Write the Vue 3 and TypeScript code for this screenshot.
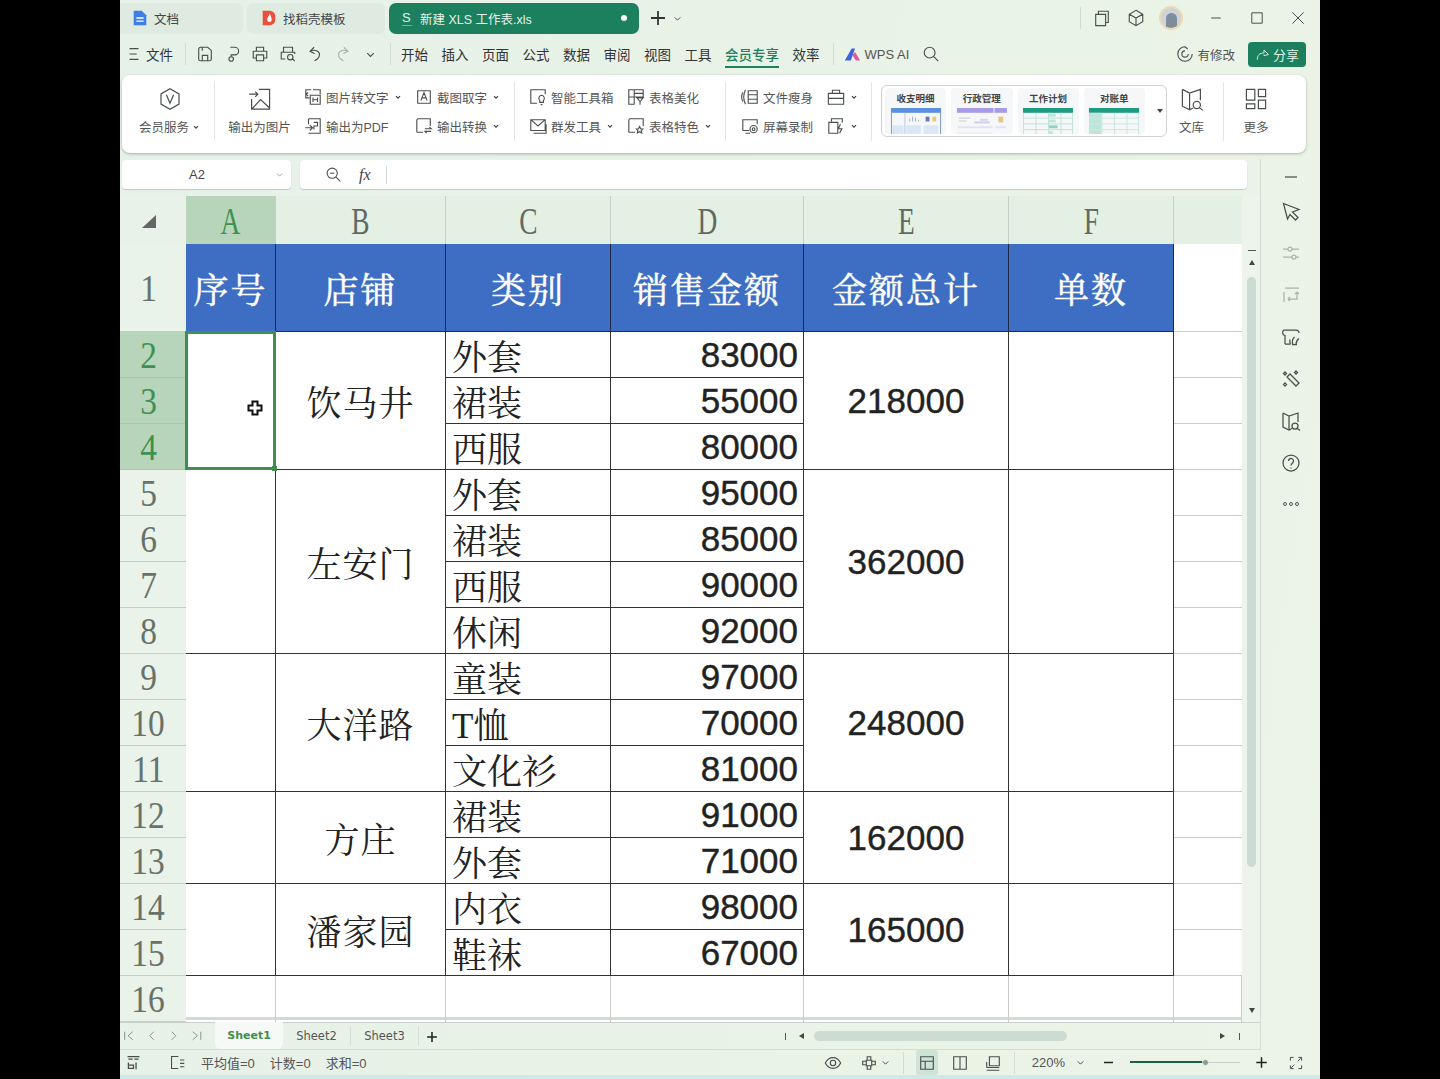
<script setup lang="ts">
interface Cell {
  key: string;
  text: string;
  cls: string[];
  row: number;
  col: number;
  span: number;
}

interface Tool {
  icon: string;
  label: string;
  arrow?: boolean;
}

const icons: Record<string, string> = {
  menu: 'M5 4h10M5 10h8M5 16h10',
  save: 'M3 4.500a2 2 0 0 1 2-2h8l4 3.500v9.500a2 2 0 0 1-2 2H5a2 2 0 0 1-2-2zM7 17.500v-6h6v6M7 2.500v4',
  key: 'M7 2.500h5a4 4 0 0 1 0 8.500H8v2M8 13a2.500 2.500 0 1 0 0 5 2.500 2.500 0 0 0 0-5',
  print: 'M6 7V2.500h8V7M6 14.500H2.500V7h15v7.500H14M6 11h8v6.500H6z',
  preview: 'M5 8V2.500h10V8M7 15.500H2.500V8h15v2M12.500 10.500a3 3 0 1 0 0 6 3 3 0 0 0 0-6M14.700 15l2.800 3',
  undo: 'M9 2.500L4.500 7l5 2.500M4.500 7c5-2.500 10.500-.5 10.500 3.500 0 3.500-2.500 5.500-5.500 7',
  redo: 'M11 2.500L15.500 7l-5 2.500M15.500 7c-5-2.500-10.500-.5-10.500 3.500 0 3.500 2.500 5.500 5.500 7',
  chevron: 'M5 8l5 5 5-5',
  close: 'M3 3l14 14M17 3L3 17',
  plus: 'M10 3v14M3 10h14',
  minus: 'M4 10h12',
  max: 'M3.500 3.500h13v13h-13z',
  restore: 'M3 6h11v12.500H3zM6 6V2.500h11V15h-3',
  cube: 'M10 1.500l7.500 4.300v8.400L10 18.500l-7.500-4.300V5.800zM2.500 5.800L10 10l7.500-4.200M10 10v8.500',
  cloud: 'M10 2a8 8 0 1 0 8 8M10 2l3 2.500M10 6.500a3.500 3.500 0 1 0 3.500 3.500',
  share: 'M3 17c0-6 3-9 9-9V4l6 6-6 1.500V10',
  search: 'M8.500 2.500a6 6 0 1 0 0 12 6 6 0 0 0 0-12M13 13l5 5',
  vip: 'M10 1.500l7.500 4.300v8.400L10 18.500l-7.500-4.300V5.800zM7 6.500l3 7 3-7',
  imgout: 'M9 2h9v16.500H3V10M1 6h7M6 3.800L8.200 6 6 8.200M3.500 18l7-7.500 7.500 7',
  imgtext: 'M8 2H2v9h4M4.500 5l-2 2 2 2M10 2h8v5M7 8h11v10H7zM10 10.500v5M15 10.500v5M10 13h5',
  pdf: 'M5 2h13v16H9M5 2v6M1.500 12H9M6.500 9l3 3-3 3M5 18h4M11 6h4v4h-4v4',
  crop: 'M3 3h14v14H3zM6.500 14l3.500-9 3.500 9M7.800 11h4.400',
  convert: 'M2 17V4a2 2 0 0 1 2-2h13v8M2 17h7M11 13h7l-2-2M18 16h-7l2 2',
  toolbox: 'M2 7V2h16v5M2 2v15h7M14 8a3.500 3.500 0 0 0-2 6v2h4v-2a3.500 3.500 0 0 0-2-6M13 18.500h2',
  beauty: 'M2 2h16v8H2zM2 10v8h6V2M8 6h10M11 11h7l-3.500 4zM14.500 15v3.500',
  mass: 'M2 3h16v12H2zM2 3l8 7 8-7M5 18h14V8',
  feature: 'M2 17V4a2 2 0 0 1 2-2h14v8M2 17h7M14 10.500l1.200 2.500 2.500.3-1.800 1.800.5 2.600-2.400-1.300-2.400 1.300.5-2.600-1.800-1.800 2.500-.3z',
  slim: 'M8 3h10v14H8zM8 7.500h10M8 12.500h10M5 2c-2.500 5-2.500 11 0 16M2 5c-1.500 3-1.500 7 0 10',
  record: 'M2 15V3h16v5M2 15h7M5 18h5M14 9.500a4 4 0 1 0 0 8 4 4 0 0 0 0-8M14 12a1.500 1.500 0 1 0 0 3 1.500 1.500 0 0 0 0-3',
  box: 'M6 6V2.500h8V6M1.500 6h17v12h-17zM1.500 11.500h17',
  copy: 'M5 5V2h12v4M2 6h10v12H2zM15 8l-2.500 5h4L14 18',
  library: 'M2 2l6 3 9-3v9M2 2v14l6 3V5M8 19l3-1.500M14 12a3 3 0 1 0 0 6 3 3 0 0 0 0-6M16 17l3 2.500',
  more: 'M2 2h7v9H2zM12 2h6v6h-6zM2 14h7v4H2zM12 11h6v7h-6z',
  pointer: 'M2.500 2.500l15.500 6-6.500 2.500 5.500 5.500-2.500 2.500-5.500-5.500L6.500 18z',
  sliders: 'M2 6h5M11 6h7M7 6a2 2 0 1 0 4 0 2 2 0 0 0-4 0M2 14h9M15 14h3M11 14a2 2 0 1 0 4 0 2 2 0 0 0-4 0',
  wrap: 'M4 3h14M3 7v10M16 7v7H7M7 14l2-2M7 14l2 2M16 7l-2 2M16 7l2 2',
  leaf: 'M4 17V8.500a3 3 0 0 1-1-5.500h12a3 3 0 0 1 3 3M4 17h5M12 17.500c-1.500-3-.5-5.500 1.500-7.500M15 17.500c0-2.500 1-4.500 3-6M9.500 17.500c-1-1.500-1-3-.5-5M11 17.500h5',
  magic: 'M6 8l3-3 9 9-3 3zM4 3l1.500 1.500L4 6 2.500 4.500zM15 2l1.500 1.500L15 5l-1.500-1.500zM4 14l1.500 1.500L4 17l-1.500-1.500z',
  help: 'M10 2a8 8 0 1 0 0 16 8 8 0 0 0 0-16M7.500 8a2.500 2.500 0 1 1 4 2c-1 .8-1.500 1.300-1.500 2.500M10 14.500v1',
  first: 'M4 4v12M16 4l-7 6 7 6',
  prev: 'M13 4l-6 6 6 6',
  next: 'M7 4l6 6-6 6',
  last: 'M16 4v12M4 4l7 6-7 6',
  vba: 'M3 3h14M4 6h5M11 6h5M4 10v7h6v-4H4M13 10v8',
  sidebar: 'M11 3H3v14h8M13 7h5M13 11h5M13 15h5',
  eye: 'M1.500 10C4 5 7 4 10 4s6 1 8.500 6c-2.500 5-5.500 6-8.500 6s-6-1-8.500-6zM10 7a3 3 0 1 0 0 6 3 3 0 0 0 0-6',
  gear: 'M7 7h6v6H7zM8 7V3h4v4M8 13v4h4v-4M7 8H3v4h4M13 8h4v4h-4',
  normal: 'M3 3h14v14H3zM3 8h14M8 8v9',
  reading: 'M3 3h14v14H3zM10 3v14',
  page: 'M6 3h11v10H6zM3 15h14M3 18h14M3 15V9',
  fit: 'M3 7V3h4M13 3h4v4M17 13v4h-4M7 17H3v-4M12 8l4-4M8 12l-4 4',
}

const toolColumns: { cls: string; tools: Tool[] }[] = [
  { cls: 'c1', tools: [{ icon: 'imgtext', label: '图片转文字', arrow: true }, { icon: 'pdf', label: '输出为PDF' }] },
  { cls: 'c2 sep', tools: [{ icon: 'crop', label: '截图取字', arrow: true }, { icon: 'convert', label: '输出转换', arrow: true }] },
  { cls: 'c3', tools: [{ icon: 'toolbox', label: '智能工具箱' }, { icon: 'mass', label: '群发工具', arrow: true }] },
  { cls: 'c4 sep', tools: [{ icon: 'beauty', label: '表格美化' }, { icon: 'feature', label: '表格特色', arrow: true }] },
  { cls: 'c5', tools: [{ icon: 'slim', label: '文件瘦身' }, { icon: 'record', label: '屏幕录制' }] },
  { cls: 'c6 sep', tools: [{ icon: 'box', label: '', arrow: true }, { icon: 'copy', label: '', arrow: true }] },
]

const menuItems = ['开始', '插入', '页面', '公式', '数据', '审阅', '视图', '工具']
const quickIcons = ['save', 'key', 'print', 'preview', 'undo', 'redo', 'chevron']
const sideIcons = ['minus', 'pointer', 'sliders', 'wrap', 'leaf', 'magic', 'library', 'help']

const gallery = [
  {
    title: '收支明细',
    rects: [
      [0, 0, 52, 5, '#5b8fe0'], [0, 5, 1, 24, '#7f98c0'], [51, 5, 1, 24, '#7f98c0'],
      [1, 18, 12, 11, '#dbe6f6'], [16, 18, 15, 11, '#dbe6f6'], [34, 18, 15, 11, '#dbe6f6'],
      [14, 5, 1, 24, '#b8c8e0'], [19, 11, 1, 3, '#9ab0d0'], [22, 9, 1, 5, '#9ab0d0'],
      [25, 10, 1, 4, '#9ab0d0'], [28, 12, 1, 2, '#9ab0d0'], [36, 9, 4, 5, '#5c7fb5'], [43, 9, 4, 5, '#eec877'],
    ],
  },
  {
    title: '行政管理',
    rects: [
      [0, 0, 38, 5, '#a79be8'], [39, 0, 13, 5, '#a79be8'], [2, 10, 12, 1, '#c9c4de'],
      [2, 13, 8, 1, '#dfc9a8'], [18, 14, 16, 2, '#cfd0e8'], [24, 11, 8, 3, '#dcdcf0'],
      [43, 9, 5, 6, '#e4c48a'], [1, 19, 36, 2, '#e3e2f3'], [1, 25, 36, 2, '#eeeef8'], [40, 19, 11, 2, '#e3e2f3'],
    ],
  },
  {
    title: '工作计划',
    rects: [
      [0, 0, 52, 5, '#1d9c84'], [0, 10, 52, 1, '#bfe2da'], [0, 16, 52, 1, '#bfe2da'], [0, 22, 52, 1, '#bfe2da'],
      [0, 5, 1, 24, '#bfe2da'], [13, 5, 1, 24, '#bfe2da'], [26, 5, 1, 24, '#bfe2da'], [39, 5, 1, 24, '#bfe2da'], [51, 5, 1, 24, '#bfe2da'],
      [27, 6, 7, 3, '#bfe5db'], [27, 12, 7, 3, '#bfe5db'], [27, 18, 9, 3, '#8fd3c4'], [27, 24, 4, 3, '#bfe5db'],
    ],
  },
  {
    title: '对账单',
    rects: [
      [0, 0, 52, 5, '#1d9c84'], [0, 5, 13, 24, '#bfe5db'], [0, 10, 52, 1, '#c9e7e0'], [0, 16, 52, 1, '#c9e7e0'],
      [0, 22, 52, 1, '#c9e7e0'], [13, 5, 1, 24, '#c9e7e0'], [26, 5, 1, 24, '#c9e7e0'], [39, 5, 1, 24, '#c9e7e0'], [51, 5, 1, 24, '#c9e7e0'],
    ],
  },
]

const groups = [
  { name: '饮马井', total: '218000', items: [['外套', '83000'], ['裙装', '55000'], ['西服', '80000']] },
  { name: '左安门', total: '362000', items: [['外套', '95000'], ['裙装', '85000'], ['西服', '90000'], ['休闲', '92000']] },
  { name: '大洋路', total: '248000', items: [['童装', '97000'], ['T恤', '70000'], ['文化衫', '81000']] },
  { name: '方庄', total: '162000', items: [['裙装', '91000'], ['外套', '71000']] },
  { name: '潘家园', total: '165000', items: [['内衣', '98000'], ['鞋袜', '67000']] },
]

function buildCells(): Cell[] {
  const list: Cell[] = []
  const add = (text: string, cls: string[], row: number, col: number, span = 1) => {
    list.push({ key: `${row}-${col}`, text, cls, row, col, span })
  }

  add('', ['corner'], 1, 1)
  ;['A', 'B', 'C', 'D', 'E', 'F'].forEach((letter, i) => {
    add(letter, i === 0 ? ['letter', 'picked'] : ['letter'], 1, i + 2)
  })
  add('', ['letter', 'plain'], 1, 8)

  for (let n = 1; n <= 16; n++) {
    add(String(n), n >= 2 && n <= 4 ? ['rownum', 'picked'] : ['rownum'], n + 1, 1)
    add('', n === 16 ? ['spare', 'tail'] : ['spare'], n + 1, 8)
  }

  ;['序号', '店铺', '类别', '销售金额', '金额总计', '单数'].forEach((title, i) => {
    add(title, ['head'], 2, i + 2)
    add('', ['spare', 'tail'], 17, i + 2)
  })

  let row = 3
  for (const group of groups) {
    const span = group.items.length
    add('', ['data', 'merged'], row, 2, span)
    add(group.name, ['data', 'merged', 'shop'], row, 3, span)
    group.items.forEach(([kind, amount], i) => {
      add(kind, ['data', 'kind'], row + i, 4)
      add(amount, ['data', 'num'], row + i, 5)
    })
    add(group.total, ['data', 'merged', 'total'], row, 6, span)
    add('', ['data', 'merged'], row, 7, span)
    row += span
  }
  return list
}

const cells = buildCells()
</script>

<template>
  <div class="app">
    <header class="titlebar">
      <div class="tab first">
        <svg class="tab-logo" viewBox="0 0 20 20"><path d="M3 2h9l5 5v11H3z" fill="#3d7fe6" /><path d="M6 10h8M6 13.500h8" stroke="#fff" stroke-width="1.500" /></svg>
        <span>文档</span>
      </div>
      <div class="tab">
        <svg class="tab-logo" viewBox="0 0 20 20"><path d="M3 2h8a6 6 0 0 1 6 6v4a6 6 0 0 1-6 6H3z" fill="#e9503f" /><path d="M11 5c-1 3-3 4-3 7a2.500 2.500 0 0 0 5 0c0-2-1-4-2-7z" fill="#fff" /></svg>
        <span>找稻壳模板</span>
      </div>
      <div class="tab active">
        <span class="tab-s">S</span>
        <span class="tab-name">新建 XLS 工作表.xls</span>
        <i class="tab-dot"></i>
      </div>
      <svg class="ico add" viewBox="0 0 20 20"><path :d="icons.plus" /></svg>
      <svg class="ico tiny" viewBox="0 0 20 20"><path :d="icons.chevron" /></svg>
      <div class="title-right">
        <i class="vline"></i>
        <svg class="ico" viewBox="0 0 20 20"><path :d="icons.restore" /></svg>
        <svg class="ico" viewBox="0 0 20 20"><path :d="icons.cube" /></svg>
        <span class="avatar"><i></i></span>
        <svg class="ico win" viewBox="0 0 20 20"><path :d="icons.minus" /></svg>
        <svg class="ico win" viewBox="0 0 20 20"><path :d="icons.max" /></svg>
        <svg class="ico win" viewBox="0 0 20 20"><path :d="icons.close" /></svg>
      </div>
    </header>

    <nav class="menubar">
      <svg class="ico menu-ico" viewBox="0 0 20 20"><path :d="icons.menu" /></svg>
      <span class="menu-file">文件</span>
      <i class="vline"></i>
      <div class="quick">
        <svg
          v-for="name in quickIcons"
          :key="name"
          class="ico"
          :class="{ faded: name === 'redo', small: name === 'chevron' }"
          viewBox="0 0 20 20"
        >
          <path :d="icons[name]" />
        </svg>
      </div>
      <i class="vline"></i>
      <div class="menu-items">
        <span v-for="item in menuItems" :key="item">{{ item }}</span>
        <span class="current">会员专享</span>
        <span>效率</span>
      </div>
      <i class="vline"></i>
      <svg class="wps-logo" viewBox="0 0 20 20"><path d="M1 17L9 3h4l-5 14z" fill="#3e63dd" /><path d="M10 11l3-4 6 10h-5z" fill="#e8559a" /></svg>
      <span class="wps-ai">WPS AI</span>
      <svg class="ico lookup" viewBox="0 0 20 20"><path :d="icons.search" /></svg>
      <div class="menu-right">
        <svg class="ico" viewBox="0 0 20 20"><path :d="icons.cloud" /></svg>
        <span>有修改</span>
        <button class="share" type="button">
          <svg class="ico" viewBox="0 0 20 20"><path :d="icons.share" /></svg>
          分享
        </button>
      </div>
    </nav>

    <section class="ribbon">
      <div class="rb-big vip sep">
        <svg class="ico big" viewBox="0 0 20 20"><path :d="icons.vip" /></svg>
        <span>会员服务<svg class="ico arrow" viewBox="0 0 20 20"><path :d="icons.chevron" /></svg></span>
      </div>
      <div class="rb-big out">
        <svg class="ico big" viewBox="0 0 20 20"><path :d="icons.imgout" /></svg>
        <span>输出为图片</span>
      </div>
      <div v-for="column in toolColumns" :key="column.cls" class="rb-col" :class="column.cls">
        <div v-for="tool in column.tools" :key="tool.icon" class="rb-item">
          <svg class="ico" viewBox="0 0 20 20"><path :d="icons[tool.icon]" /></svg>
          <span v-if="tool.label">{{ tool.label }}</span>
          <svg v-if="tool.arrow" class="ico arrow" viewBox="0 0 20 20"><path :d="icons.chevron" /></svg>
        </div>
      </div>
      <div class="gallery">
        <div v-for="card in gallery" :key="card.title" class="g-card">
          <b>{{ card.title }}</b>
          <svg viewBox="0 0 52 27" width="52" height="27">
            <rect
              v-for="(r, i) in card.rects"
              :key="i"
              :x="(r[0] as number)"
              :y="(r[1] as number)"
              :width="(r[2] as number)"
              :height="(r[3] as number)"
              :fill="(r[4] as string)"
            />
          </svg>
        </div>
        <i class="g-more"></i>
      </div>
      <div class="rb-big lib sep">
        <svg class="ico big" viewBox="0 0 20 20"><path :d="icons.library" /></svg>
        <span>文库</span>
      </div>
      <div class="rb-big mor">
        <svg class="ico big" viewBox="0 0 20 20"><path :d="icons.more" /></svg>
        <span>更多</span>
      </div>
    </section>

    <div class="formula">
      <div class="namebox">
        <span>A2</span>
        <svg class="ico tiny" viewBox="0 0 20 20"><path :d="icons.chevron" /></svg>
      </div>
      <div class="fxbox">
        <svg class="ico zoomy" viewBox="0 0 20 20"><path :d="icons.search" /><path d="M6 8.500h5" /></svg>
        <em>fx</em>
        <i class="vline"></i>
      </div>
    </div>

    <main class="workspace">
      <div class="sheet">
        <div
          v-for="cell in cells"
          :key="cell.key"
          class="cell"
          :class="cell.cls"
          :style="{ gridArea: `${cell.row} / ${cell.col} / span ${cell.span}` }"
        >
          <span v-if="cell.text">{{ cell.text }}</span>
          <i v-else-if="cell.cls.includes('corner')" class="tri"></i>
        </div>
        <div class="selection">
          <svg class="cursor" viewBox="0 0 16 16">
            <path d="M5.500 1.500h5v4h4v5h-4v4h-5v-4h-4v-5h4z" fill="#fff" stroke="#111" stroke-width="2" />
          </svg>
        </div>
      </div>
      <div class="vscroll">
        <i class="vs-mark"></i>
        <i class="tri-up"></i>
        <i class="vs-thumb"></i>
        <i class="tri-down"></i>
      </div>
      <aside class="sidebar">
        <svg
          v-for="name in sideIcons"
          :key="name"
          class="ico"
          :class="{ faded: name === 'sliders' || name === 'wrap' }"
          viewBox="0 0 20 20"
        >
          <path :d="icons[name]" />
        </svg>
        <span class="dots"><i></i><i></i><i></i></span>
      </aside>
    </main>

    <div class="tabsbar">
      <div class="tab-nav">
        <svg v-for="name in ['first', 'prev', 'next', 'last']" :key="name" class="ico" viewBox="0 0 20 20"><path :d="icons[name]" /></svg>
      </div>
      <span class="sheet-tab on">Sheet1</span>
      <span class="sheet-tab">Sheet2</span>
      <span class="sheet-tab ruled">Sheet3</span>
      <svg class="ico sheet-add" viewBox="0 0 20 20"><path :d="icons.plus" /></svg>
      <div class="hscroll">
        <i class="bar"></i>
        <i class="tri-left"></i>
        <span class="hs-track"><i></i></span>
        <i class="tri-right"></i>
        <i class="bar"></i>
      </div>
    </div>

    <footer class="statusbar">
      <svg class="ico st-vba" viewBox="0 0 20 20"><path :d="icons.vba" /></svg>
      <svg class="ico st-side" viewBox="0 0 20 20"><path :d="icons.sidebar" /></svg>
      <span>平均值=0</span>
      <span>计数=0</span>
      <span>求和=0</span>
      <div class="st-right">
        <svg class="ico st-eye" viewBox="0 0 20 20"><path :d="icons.eye" /></svg>
        <svg class="ico st-gear" viewBox="0 0 20 20"><path :d="icons.gear" /></svg>
        <svg class="ico tiny st-drop" viewBox="0 0 20 20"><path :d="icons.chevron" /></svg>
        <i class="st-sep"></i>
        <span class="view on"><svg class="ico" viewBox="0 0 20 20"><path :d="icons.normal" /></svg></span>
        <span class="view"><svg class="ico" viewBox="0 0 20 20"><path :d="icons.reading" /></svg></span>
        <span class="view end"><svg class="ico" viewBox="0 0 20 20"><path :d="icons.page" /></svg></span>
        <i class="st-sep"></i>
        <span class="zoom-val">220%</span>
        <svg class="ico tiny" viewBox="0 0 20 20"><path :d="icons.chevron" /></svg>
        <svg class="ico st-pm" viewBox="0 0 20 20"><path :d="icons.minus" /></svg>
        <span class="slider"><i class="fill"></i><i class="thumb"></i></span>
        <svg class="ico st-pm" viewBox="0 0 20 20"><path :d="icons.plus" /></svg>
        <svg class="ico st-fit" viewBox="0 0 20 20"><path :d="icons.fit" /></svg>
      </div>
    </footer>
    <div class="strip"></div>
  </div>
</template>

<style>
body {
  background: #000;
}
</style>

<style scoped>
.app {
  width: 1200px;
  height: 1079px;
  margin: 0 auto;
  display: flex;
  flex-direction: column;
  overflow: hidden;
  background: linear-gradient(100deg, #e6f1e8, #ebf4e6);
  font-family: "Liberation Sans", "Noto Sans CJK SC", sans-serif;
  font-size: 12.5px;
  color: #555;
}

.ico {
  width: 18px;
  height: 18px;
  flex: none;
  fill: none;
  stroke: #4a4f4c;
  stroke-width: 1.25;
}

.ico.tiny {
  width: 11px;
  height: 11px;
  stroke-width: 1.8;
}

.ico.faded {
  stroke: #aab3ad;
}

.ico.arrow {
  width: 8px;
  height: 8px;
  margin-left: 3px;
  stroke: #444;
  stroke-width: 3;
  vertical-align: 1px;
}

.vline {
  width: 1px;
  height: 22px;
  flex: none;
  background: #cfdcd2;
}

.titlebar {
  height: 36px;
  flex: none;
  display: flex;
  align-items: center;
  gap: 4px;
  box-sizing: border-box;
}

.tab {
  width: 138px;
  height: 31px;
  display: flex;
  align-items: center;
  gap: 5px;
  padding-left: 13px;
  box-sizing: border-box;
  border-radius: 7px;
  background: #dfebe0;
  color: #444;
}

.tab.first {
  width: 123px;
  padding-left: 11px;
  border-radius: 0 7px 7px 0;
}

.tab.active {
  width: 250px;
  padding-left: 13px;
  background: #1c7f5e;
  color: #e4f3ec;
}

.tab-logo {
  width: 18px;
  height: 20px;
}

.tab-s {
  width: 10px;
  margin-right: 3px;
  font-size: 13px;
  border-bottom: 1px solid #6fb097;
}

.tab-name {
  flex: 1;
}

.tab-dot {
  width: 6px;
  height: 6px;
  margin-right: 12px;
  border-radius: 50%;
  background: #fff;
}

.ico.add {
  width: 20px;
  height: 20px;
  margin-left: 5px;
  stroke: #333;
  stroke-width: 1.8;
}

.title-right {
  margin-left: auto;
  display: flex;
  align-items: center;
  gap: 16px;
  padding-right: 14px;
}

.title-right .vline {
  margin-right: -4px;
}

.avatar {
  width: 24px;
  height: 24px;
  margin-left: -2px;
  display: flex;
  align-items: flex-end;
  justify-content: center;
  overflow: hidden;
  box-sizing: border-box;
  border: 2px solid #eed9b0;
  border-radius: 50%;
  background: #ccd3d9;
}

.avatar i {
  width: 11px;
  height: 15px;
  border-radius: 6px 6px 0 0;
  background: #7f8c9c;
}

.ico.win {
  margin-left: 9px;
  width: 16px;
  height: 16px;
}

.menubar {
  height: 36px;
  flex: none;
  display: flex;
  align-items: center;
  font-size: 13.5px;
  color: #333;
}

.menu-ico {
  margin-left: 5px;
}

.menu-file {
  margin-left: 3px;
}

.menubar > .vline:nth-of-type(1) {
  margin-left: 12px;
}

.quick {
  display: flex;
  align-items: center;
  gap: 9.500px;
  margin: 0 13px 0 10px;
}

.quick .small {
  width: 13px;
  height: 13px;
  margin-left: 3px;
  stroke-width: 1.800;
}

.menu-items {
  display: flex;
  gap: 13.500px;
  margin: 0 13px 0 10px;
}

.menu-items .current {
  position: relative;
  color: #1c7f5e;
  font-weight: 500;
}

.menu-items .current::after {
  content: "";
  position: absolute;
  left: 0;
  right: 0;
  bottom: -4px;
  height: 2px;
  background: #1c7f5e;
}

.wps-logo {
  width: 17px;
  height: 17px;
  margin-left: 10px;
}

.wps-ai {
  margin-left: 4px;
  font-size: 13px;
  color: #555;
}

.lookup {
  margin-left: 13px;
}

.menu-right {
  margin-left: auto;
  display: flex;
  align-items: center;
  gap: 3px;
  margin-right: 14px;
  font-size: 12.5px;
  color: #555;
}

.share {
  width: 58px;
  height: 25px;
  margin-left: 10px;
  display: flex;
  align-items: center;
  justify-content: center;
  gap: 3px;
  padding: 0;
  border: 0;
  border-radius: 4px;
  background: #1c7f5e;
  color: #dff0e8;
  font: inherit;
  font-size: 13px;
}

.share .ico {
  width: 15px;
  height: 15px;
  stroke: #dff0e8;
}

.ribbon {
  width: 1184px;
  height: 78px;
  margin: 3px 0 0 2px;
  flex: none;
  display: flex;
  align-items: stretch;
  padding: 7px 0 12px;
  box-sizing: border-box;
  border-radius: 8px;
  background: #fff;
  box-shadow: 0 1px 3px rgba(70, 90, 75, 0.4);
}

.sep {
  border-right: 1px solid #e3e7e4;
}

.rb-big {
  flex: none;
  display: flex;
  flex-direction: column;
  align-items: center;
  justify-content: center;
  gap: 6px;
  box-sizing: border-box;
  white-space: nowrap;
}

.ico.big {
  width: 24px;
  height: 24px;
  stroke-width: 1;
}

.rb-big.vip {
  width: 93px;
  padding-left: 3px;
}

.rb-big.out {
  width: 89px;
}

.rb-big.lib {
  width: 57px;
  padding-right: 7px;
}

.rb-big.mor {
  width: 64px;
}

.rb-col {
  flex: none;
  display: flex;
  flex-direction: column;
  justify-content: center;
  gap: 11px;
  box-sizing: border-box;
  white-space: nowrap;
}

.rb-item {
  display: flex;
  align-items: center;
  gap: 4px;
  height: 18px;
}

.rb-item .arrow {
  margin-left: 1px;
}

.c1 {
  width: 111px;
}

.c2 {
  width: 100px;
}

.c3 {
  width: 112px;
  padding-left: 14px;
}

.c4 {
  width: 99px;
}

.c5 {
  width: 101px;
  padding-left: 15px;
}

.c6 {
  width: 45px;
}

.gallery {
  width: 286px;
  height: 52px;
  margin: 3px 0 0 9px;
  flex: none;
  display: flex;
  align-items: stretch;
  gap: 5px;
  padding: 2px 3px;
  box-sizing: border-box;
  border: 1px solid #cfd2d0;
  border-radius: 6px;
}

.g-card {
  width: 62px;
  display: flex;
  flex-direction: column;
  align-items: center;
  overflow: hidden;
  border-radius: 4px;
  background: #f5f7f8;
}

.g-card b {
  height: 20px;
  flex: none;
  font-size: 9.5px;
  line-height: 22px;
  color: #444;
}

.g-more {
  width: 0;
  height: 0;
  margin: 21px 0 0 7px;
  border: 3px solid transparent;
  border-top: 4px solid #444;
}

.formula {
  height: 29px;
  margin-top: 7px;
  flex: none;
  display: flex;
  gap: 9px;
  padding-left: 2px;
}

.namebox,
.fxbox {
  display: flex;
  align-items: center;
  box-sizing: border-box;
  border-radius: 4px;
  background: #fff;
  box-shadow: 0 1px 1px rgba(70, 90, 75, 0.25);
}

.namebox {
  width: 169px;
  color: #444;
  font-size: 13px;
}

.namebox span {
  margin-left: 67px;
}

.namebox .ico {
  margin-left: auto;
  margin-right: 6px;
  stroke: #777;
  stroke-width: 1.200;
}

.fxbox {
  width: 947px;
}

.ico.zoomy {
  width: 17px;
  height: 17px;
  margin-left: 25px;
}

.fxbox em {
  margin-left: 17px;
  font-family: "Liberation Serif", serif;
  font-size: 16px;
  color: #444;
}

.fxbox .vline {
  height: 18px;
  margin-left: 15px;
}

.workspace {
  height: 826px;
  margin-top: 7px;
  flex: none;
  display: flex;
}

.sheet {
  position: relative;
  width: 1122px;
  height: 826px;
  flex: none;
  display: grid;
  grid-template-columns: 66px 90px 170px 165px 193px 205px 165px 68px;
  grid-template-rows: 48px 88px repeat(15, 46px);
  background: #fff;
}

.cell {
  display: flex;
  align-items: center;
  justify-content: center;
  box-sizing: border-box;
  overflow: hidden;
  font-size: 35px;
  white-space: nowrap;
}

.corner {
  padding-right: 8px;
  padding-top: 2px;
  background: #e8f2e8;
}

.tri {
  width: 0;
  height: 0;
  border-style: solid;
  border-width: 0 0 13px 14px;
  border-color: transparent transparent #666 transparent;
}

.letter {
  padding-top: 3px;
  border-right: 1px solid #c3d0c6;
  background: #e5f0e5;
  color: #5f6a62;
  font-family: "Liberation Serif", serif;
  font-size: 37px;
}

.letter span {
  display: inline-block;
  transform: scaleX(0.74);
}

.letter.plain {
  border-right: 0;
}

.rownum {
  padding: 1px 10px 0 0;
  border-bottom: 1px solid #c3d0c6;
  background: #e9f3e9;
  color: #687269;
  font-family: "Liberation Serif", serif;
  font-size: 38px;
}

.rownum span {
  display: inline-block;
  transform: scaleX(0.88);
}

.letter.picked,
.rownum.picked {
  background: #b7d5bb;
  color: #3f9150;
}

.rownum.picked {
  border-bottom-color: #a5c6aa;
}

.head {
  border-right: 1px solid #1f2a44;
  border-bottom: 1px solid #1f2a44;
  background: #3d6ec3;
  color: #fff;
  font-family: "Liberation Serif", "Noto Serif CJK SC", "Noto Sans CJK SC", serif;
  letter-spacing: 2px;
  -webkit-text-stroke: 0.5px #fff;
}

.spare {
  border-bottom: 1px solid #c9cec9;
}

.spare.tail {
  border-bottom: 0;
  border-right: 1px solid #c9cec9;
  box-shadow: inset 0 -2px 0 #fff, inset 0 -5px 0 #d5d8d5;
}

.data {
  border-right: 1px solid #333;
  border-bottom: 1px solid #333;
  color: #222;
  font-family: "Liberation Serif", "Noto Serif CJK SC", "Noto Sans CJK SC", serif;
}

.shop {
  letter-spacing: 1px;
}

.kind {
  justify-content: flex-start;
  padding-left: 6px;
}

.num {
  justify-content: flex-end;
  padding: 1px 5px 0 0;
  font-family: "Liberation Sans", sans-serif;
  -webkit-text-stroke: 0.4px #222;
}

.total {
  padding-top: 1px;
  font-family: "Liberation Sans", sans-serif;
  -webkit-text-stroke: 0.4px #222;
}

.selection {
  position: absolute;
  left: 65px;
  top: 135px;
  width: 91px;
  height: 139px;
  box-sizing: border-box;
  border: 3px solid #3f8f4e;
}

.selection::after {
  content: "";
  position: absolute;
  right: -4px;
  bottom: -4px;
  width: 5px;
  height: 5px;
  background: #3f8f4e;
}

.cursor {
  position: absolute;
  left: 59px;
  top: 66px;
  width: 16px;
  height: 16px;
}

.vscroll {
  position: relative;
  width: 18px;
  flex: none;
  background: #ecf4ec;
}

.vs-mark {
  position: absolute;
  left: 6px;
  top: 54px;
  width: 8px;
  height: 1px;
  background: #555;
}

.tri-up,
.tri-down {
  position: absolute;
  left: 7px;
  width: 0;
  height: 0;
  border-left: 3px solid transparent;
  border-right: 3px solid transparent;
}

.tri-up {
  top: 64px;
  border-bottom: 5px solid #444;
}

.tri-down {
  top: 812px;
  border-top: 5px solid #444;
}

.vs-thumb {
  position: absolute;
  left: 5px;
  top: 81px;
  width: 9px;
  height: 590px;
  border-radius: 5px;
  background: #cddcd3;
}

.sidebar {
  width: 60px;
  height: 863px;
  margin-top: -37px;
  flex: none;
  display: flex;
  flex-direction: column;
  align-items: center;
  gap: 22px;
  padding-top: 8px;
  box-sizing: border-box;
  border-left: 1px solid #d3ddd5;
}

.sidebar .ico {
  width: 20px;
  height: 20px;
}

.sidebar .ico:first-child {
  margin-bottom: -8px;
}

.dots {
  display: flex;
  gap: 2px;
  margin-top: 7px;
}

.dots i {
  width: 4px;
  height: 4px;
  box-sizing: border-box;
  border: 1px solid #555;
  border-radius: 50%;
}

.tabsbar {
  height: 28px;
  width: 1141px;
  flex: none;
  display: flex;
  align-items: stretch;
  box-sizing: border-box;
  border-top: 1px solid #c9d3cb;
  border-bottom: 1px solid #d3ddd5;
  border-right: 1px solid #d3ddd5;
}

.tab-nav {
  width: 95px;
  flex: none;
  display: flex;
  align-items: center;
  gap: 9px;
  padding-left: 2px;
  box-sizing: border-box;
}

.tab-nav .ico {
  width: 13.500px;
  height: 13.500px;
  stroke: #7c847d;
}

.sheet-tab {
  display: flex;
  align-items: center;
  justify-content: center;
  width: 68px;
  box-sizing: border-box;
  color: #555;
  font-family: "DejaVu Sans", "Liberation Sans", sans-serif;
  font-size: 11.5px;
  border-right: 1px solid #d3ddd5;
  margin: 3px 0;
}

.sheet-tab.on {
  margin: -1px 0 0;
  border: 0;
  border-radius: 0 0 6px 6px;
  background: #f6faf6;
  color: #3f8f4e;
  font-size: 11px;
  font-weight: 700;
}

.ico.sheet-add {
  width: 14px;
  height: 14px;
  margin: 7px 0 0 6px;
  stroke: #222;
  stroke-width: 2.200;
}

.hscroll {
  margin-left: auto;
  display: flex;
  align-items: center;
  padding-right: 20px;
}

.bar {
  width: 1px;
  height: 7px;
  background: #555;
}

.tri-left,
.tri-right {
  width: 0;
  height: 0;
  border-top: 3px solid transparent;
  border-bottom: 3px solid transparent;
}

.tri-left {
  margin: 0 10px 0 13px;
  border-right: 5px solid #444;
}

.tri-right {
  margin: 0 14px 0 10px;
  border-left: 5px solid #444;
}

.hs-track {
  width: 396px;
}

.hs-track i {
  display: block;
  width: 253px;
  height: 10px;
  border-radius: 5px;
  background: #cddcd3;
}

.statusbar {
  height: 25px;
  flex: none;
  display: flex;
  align-items: center;
  gap: 15px;
  font-size: 13px;
  color: #555;
}

.st-vba {
  margin-left: 5px;
  width: 17px;
  height: 17px;
  stroke-width: 1.500;
}

.st-side {
  margin: 0 0 0 12px;
  width: 17px;
  height: 17px;
}

.st-right {
  margin-left: auto;
  display: flex;
  align-items: center;
}

.st-eye {
  margin-right: 17.500px;
}

.st-gear {
  margin-right: 2px;
}

.st-drop {
  margin-right: 2px;
}

.st-sep {
  width: 1px;
  height: 22px;
  margin: 0 12px 0 10px;
  background: #d3ddd5;
}

.view {
  width: 22px;
  height: 25px;
  margin-right: 11px;
  display: flex;
  align-items: center;
  justify-content: center;
  border-radius: 3px;
}

.view.end {
  margin-right: 0;
}

.view.on {
  background: #cfe3d7;
}

.zoom-val {
  margin-left: 5px;
  font-size: 13px;
}

.zoom-val + .ico {
  margin-left: 10px;
  margin-right: 15px;
}

.st-pm {
  width: 15px;
  height: 15px;
  stroke: #222;
  stroke-width: 2;
}

.slider {
  position: relative;
  width: 110px;
  height: 1px;
  margin: 0 14px;
  background: #c9d3cb;
}

.fill {
  position: absolute;
  left: 0;
  top: -1px;
  width: 75px;
  height: 2px;
  background: #17604a;
}

.thumb {
  position: absolute;
  left: 72px;
  top: -3px;
  width: 7px;
  height: 7px;
  box-sizing: border-box;
  border: 1px solid #e8f0ea;
  border-radius: 50%;
  background: #8a9c94;
}

.st-fit {
  margin: 0 16px 0 19px;
  width: 16px;
  height: 16px;
}

.strip {
  flex: 1;
  background: #cfe8ea;
}
</style>
